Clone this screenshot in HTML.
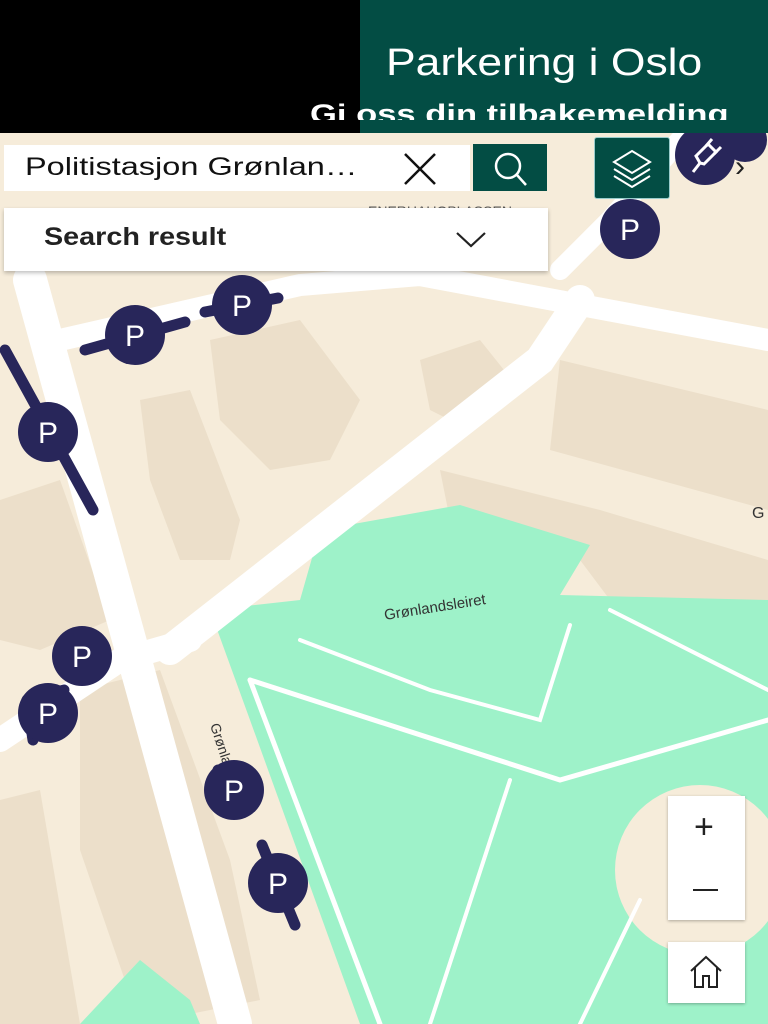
<!DOCTYPE html>
<html><head><meta charset="utf-8"><style>
*{margin:0;padding:0;box-sizing:border-box}
body{width:768px;height:1024px;overflow:hidden;position:relative;background:#f6ecda;font-family:"Liberation Sans",sans-serif}
.hdr{position:absolute;left:0;top:0;width:768px;height:133px;background:#000}
.hdr .g{position:absolute;left:360px;top:0;width:408px;height:133px;background:#034d44;overflow:hidden}
.t1{position:absolute;left:386px;top:42px;color:#fff;font-size:38px;transform:scaleX(1.17);transform-origin:left}
.t2{position:absolute;left:310px;top:96px;height:24px;overflow:hidden;color:#fff;font-size:27px;font-weight:bold;line-height:36px;transform:scaleX(1.28);transform-origin:left}
.map{position:absolute;left:0;top:133px}
.box{position:absolute;background:#fff}
</style></head><body>
<svg class="map" width="768" height="891" viewBox="0 133 768 891">
<rect x="0" y="133" width="768" height="891" fill="#f6ecda"/>
<g fill="#ecdfca">
<polygon points="420,360 480,340 520,390 470,430 430,410"/>
<polygon points="140,400 190,390 240,520 230,560 180,560 150,480"/>
<polygon points="210,340 300,320 360,400 330,460 270,470 220,420"/>
<polygon points="560,360 768,410 768,510 550,450"/>
<polygon points="440,470 600,510 768,560 768,620 640,640 580,560 450,520"/>
<polygon points="0,500 60,480 110,620 40,650 0,640"/>
<polygon points="80,690 160,670 230,860 260,1000 140,1024 80,850"/>
<polygon points="0,800 40,790 80,1024 0,1024"/>
</g>
<polygon points="210,610 300,600 320,530 460,505 590,545 560,595 768,600 768,1024 360,1024 250,720" fill="#9ef2c9"/>
<polygon points="80,1024 140,960 190,1000 200,1024" fill="#9ef2c9"/>
<circle cx="700" cy="870" r="85" fill="#f6ecda"/>
<g stroke="#fff" fill="none" stroke-linecap="round">
<path d="M30,280 L235,1024" stroke-width="34"/>
<path d="M170,650 L540,360 L580,300" stroke-width="30"/>
<path d="M60,340 L300,285 L420,275 L768,340" stroke-width="22"/>
<path d="M0,740 L120,660 L190,640" stroke-width="24"/>
<path d="M560,270 L610,220 L680,140" stroke-width="20"/>
<path d="M250,680 L560,780 L768,720" stroke-width="5"/>
<path d="M250,680 L380,1024" stroke-width="5"/>
<path d="M510,780 L430,1024" stroke-width="4"/>
<path d="M570,625 L540,720 L430,690 L300,640" stroke-width="4"/>
<path d="M610,610 L768,690" stroke-width="4"/>
<path d="M640,900 L580,1024" stroke-width="4"/>
</g>
<text x="385" y="620" font-size="15" fill="#333" transform="rotate(-9 385 620)" font-family="Liberation Sans">Grønlandsleiret</text>
<text x="210" y="725" font-size="14" fill="#333" transform="rotate(72 210 725)" font-family="Liberation Sans">Grønlandsleiret</text>
<text x="368" y="216" font-size="14" fill="#555" font-family="Liberation Sans">ENERHAUGPLASSEN</text>
<text x="752" y="518" font-size="16" fill="#333" font-family="Liberation Sans">G</text>
<g stroke="#28265a" stroke-width="11" stroke-linecap="round">
<path d="M5,350 L93,510"/>
<path d="M85,350 L185,322"/>
<path d="M205,312 L278,298"/>
<path d="M28,700 L64,690"/>
<path d="M27,700 L33,740"/>
<path d="M218,770 L245,810"/>
<path d="M262,845 L295,925"/>
</g>
<g fill="#28265a">
<circle cx="135" cy="335" r="30"/><circle cx="242" cy="305" r="30"/>
<circle cx="48" cy="432" r="30"/><circle cx="630" cy="229" r="30"/>
<circle cx="82" cy="656" r="30"/><circle cx="48" cy="713" r="30"/>
<circle cx="234" cy="790" r="30"/><circle cx="278" cy="883" r="30"/>
<circle cx="705" cy="155" r="30"/><circle cx="745" cy="140" r="22"/>
</g>
<g fill="#fff" font-size="30" font-family="Liberation Sans" text-anchor="middle">
<text x="135" y="346">P</text><text x="242" y="316">P</text><text x="48" y="443">P</text>
<text x="630" y="240">P</text><text x="82" y="667">P</text><text x="48" y="724">P</text>
<text x="234" y="801">P</text><text x="278" y="894">P</text>
</g>
<g stroke="#fff" stroke-width="3" fill="none"><path d="M693,172 L700,163"/><path d="M700,163 L696,156 L708,144 L716,152 L704,164 Z"/><path d="M706,146 L712,139 M714,154 L721,147"/></g>
</svg>
<div class="hdr"><div class="g"></div></div>
<div class="t1">Parkering i Oslo</div>
<div class="t2">Gi oss din tilbakemelding</div>
<div class="box" style="left:4px;top:145px;width:466px;height:46px"></div>
<div style="position:absolute;left:25px;top:153px;font-size:25px;color:#111;transform:scaleX(1.3);transform-origin:left">Politistasjon Grønlan…</div>
<svg style="position:absolute;left:403px;top:152px" width="34" height="34"><path d="M2,2 L32,32 M32,2 L2,32" stroke="#111" stroke-width="2.5"/></svg>
<div class="box" style="left:473px;top:144px;width:74px;height:47px;background:#034d44"></div>
<svg style="position:absolute;left:490px;top:150px" width="40" height="38"><circle cx="18" cy="16" r="12" stroke="#fff" stroke-width="2.5" fill="none"/><path d="M27,25 L36,35" stroke="#fff" stroke-width="2.5"/></svg>
<div class="box" style="left:594px;top:137px;width:76px;height:62px;background:#034d44;border:1px solid #9cc;border-radius:3px"></div>
<svg style="position:absolute;left:610px;top:148px" width="44" height="40"><g stroke="#fff" stroke-width="2" fill="none"><path d="M22,3 L40,14 L22,25 L4,14 Z"/><path d="M4,21 L22,32 L40,21"/><path d="M4,28 L22,39 L40,28"/></g></svg>
<div style="position:absolute;left:735px;top:150px;font-size:30px;color:#222">›</div>
<div class="box" style="left:4px;top:208px;width:544px;height:63px;box-shadow:0 2px 4px rgba(0,0,0,.25)"></div>
<div style="position:absolute;left:44px;top:223px;font-size:25px;font-weight:bold;color:#222;transform:scaleX(1.15);transform-origin:left">Search result</div>
<svg style="position:absolute;left:455px;top:230px" width="32" height="20"><path d="M2,3 L16,16 L30,3" stroke="#222" stroke-width="2.2" fill="none"/></svg>
<div class="box" style="left:668px;top:796px;width:77px;height:124px;box-shadow:0 1px 3px rgba(0,0,0,.3)"></div>
<div style="position:absolute;left:694px;top:808px;font-size:34px;color:#222">+</div>
<div style="position:absolute;left:693px;top:889px;width:25px;height:2px;background:#222"></div>
<div class="box" style="left:668px;top:942px;width:77px;height:61px;box-shadow:0 1px 3px rgba(0,0,0,.3)"></div>
<svg style="position:absolute;left:688px;top:954px" width="36" height="36"><path d="M3,17 L18,3 L33,17 M7,14 L7,33 L15,33 L15,22 L21,22 L21,33 L29,33 L29,14" stroke="#222" stroke-width="2" fill="none"/></svg>
</body></html>
